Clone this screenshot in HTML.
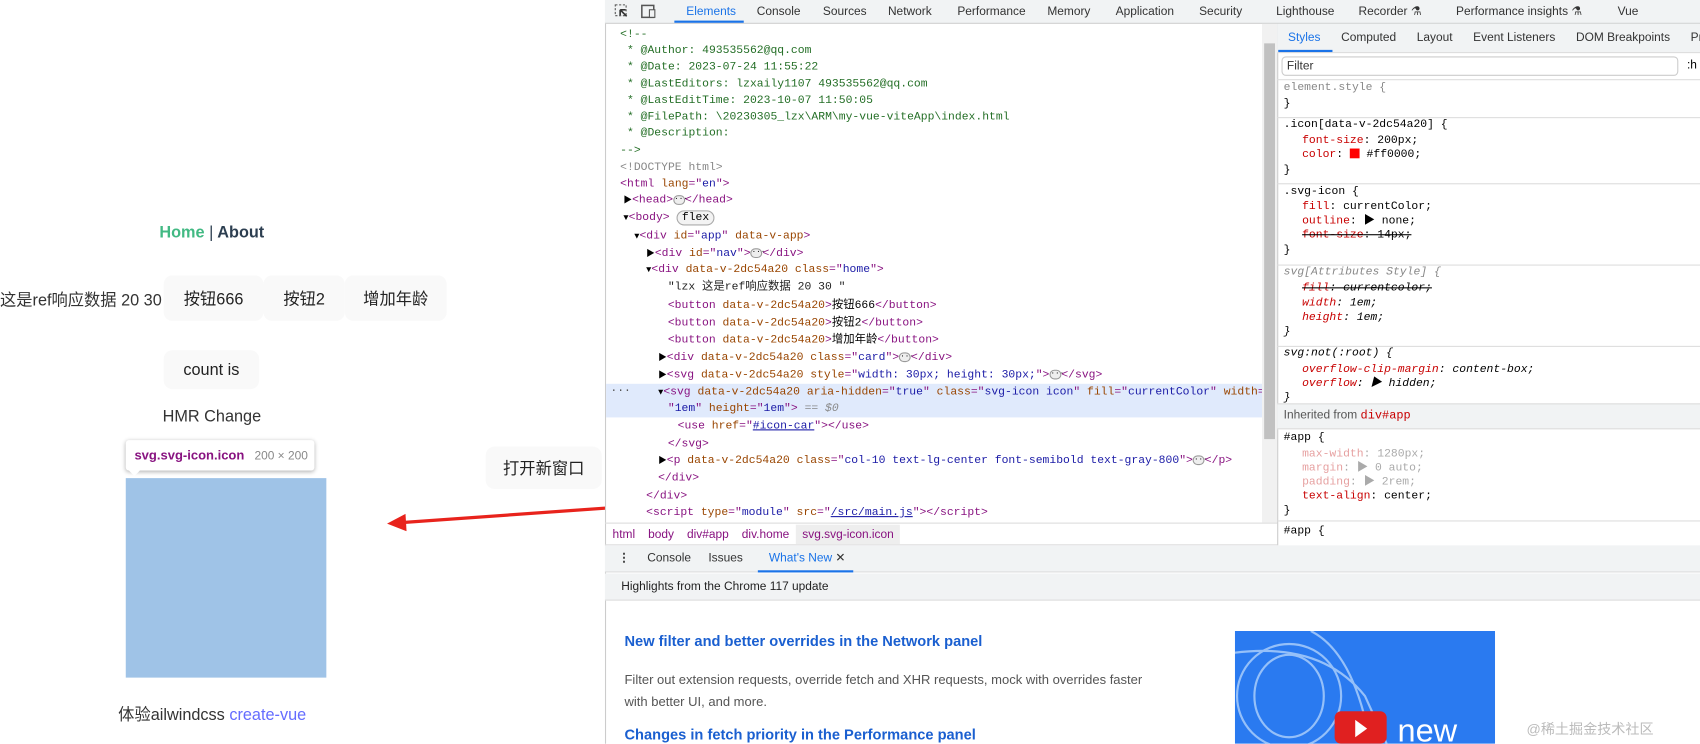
<!DOCTYPE html>
<html><head><meta charset="utf-8">
<style>
*{box-sizing:border-box;margin:0;padding:0}
html,body{width:1700px;height:744px;overflow:hidden;background:#fff}
#w{position:absolute;left:0;top:0;width:1568px;height:686px;transform:scale(1.08418);transform-origin:0 0;font-family:"Liberation Sans","Noto Sans CJK SC",sans-serif;}
.a{position:absolute;white-space:nowrap}
.btn{position:absolute;background:#f9f9f9;border-radius:8px;font-size:15px;color:#222;display:flex;align-items:center;justify-content:center}
.mono{font-family:"Liberation Mono","Noto Sans CJK SC",monospace;font-size:10.5px}
.code .a{height:15px;line-height:15px}
.tg{color:#881280}.at{color:#994500}.av{color:#1a1aa6}.cm{color:#236e25}
.tab{position:absolute;top:0;height:22px;line-height:22px;font-size:11px;color:#333}
.pr{color:#c80000}
.ell{display:inline-block;width:11px;height:9px;border:1px solid #999;border-radius:5px;font-size:7px;line-height:6px;text-align:center;vertical-align:middle;background:#eee}
</style></head><body><div id="w">
<div class="a" style="left:147px;top:206px;font-size:15px;font-weight:bold"><span style="color:#42b983">Home</span> <span style="color:#2c3e50;font-weight:normal">|</span> <span style="color:#2c3e50">About</span></div>
<div class="a" style="left:0;top:266px;font-size:15px;color:#333">这是ref响应数据 20 30</div>
<div class="btn" style="left:151px;top:254px;width:92px;height:42px">按钮666</div>
<div class="btn" style="left:243px;top:254px;width:75px;height:42px">按钮2</div>
<div class="btn" style="left:318px;top:254px;width:94px;height:42px">增加年龄</div>
<div class="btn" style="left:151px;top:323px;width:88px;height:36px">count is</div>
<div class="a" style="left:150px;top:376px;font-size:15px;color:#333">HMR Change</div>
<div class="a" style="left:116px;top:406px;width:174px;height:28px;background:#fff;border-radius:3px;box-shadow:0 1px 4px rgba(0,0,0,.3);font-size:12px;line-height:28px;padding-left:8px"><b style="color:#881280">svg.svg-icon.icon</b> <span style="color:#888;font-size:11px;margin-left:6px">200 × 200</span></div>
<div class="a" style="left:118px;top:433px;width:0;height:0;border-left:6px solid transparent;border-right:6px solid transparent;border-top:6px solid #fff"></div>
<div class="a" style="left:116px;top:441px;width:185px;height:184px;background:#9fc3e7"></div>
<div class="btn" style="left:448px;top:412px;width:107px;height:39px">打开新窗口</div>
<svg class="a" style="left:350px;top:460px" width="240" height="30"><line x1="232" y1="7" x2="20" y2="22" stroke="#e8231c" stroke-width="3"/><polygon points="7,23 24,14 25,30" fill="#e8231c"/></svg>
<div class="a" style="left:109px;top:648px;font-size:15px;color:#333">体验ailwindcss <span style="color:#646cff">create-vue</span></div>

<div class="a" style="left:558px;top:0;width:1010px;height:686px;background:#fff;border-left:1px solid #ccc"></div>
<div class="a" style="left:558px;top:0;width:1010px;height:22px;background:#f1f3f4;border-bottom:1px solid #d0d0d0"></div>
<svg class="a" style="left:566px;top:3px" width="40" height="16"><rect x="1.5" y="1.5" width="10" height="10" fill="none" stroke="#555" stroke-dasharray="2 1.5"/><path d="M6 6 L12 12 M6 6 v5 M6 6 h5" stroke="#333" stroke-width="1.5" fill="none"/><rect x="26" y="2" width="11" height="11" fill="none" stroke="#555" stroke-width="1.4"/><rect x="33" y="6" width="5" height="7" fill="#f1f3f4" stroke="#555"/></svg>
<div class="tab" style="left:633px;color:#1a73e8">Elements</div>
<div class="a" style="left:622px;top:19px;width:64px;height:2px;background:#1a73e8"></div>
<div class="tab" style="left:698px">Console</div>
<div class="tab" style="left:759px">Sources</div>
<div class="tab" style="left:819px">Network</div>
<div class="tab" style="left:883px">Performance</div>
<div class="tab" style="left:966px">Memory</div>
<div class="tab" style="left:1029px">Application</div>
<div class="tab" style="left:1106px">Security</div>
<div class="tab" style="left:1177px">Lighthouse</div>
<div class="tab" style="left:1253px">Recorder ⚗</div>
<div class="tab" style="left:1343px">Performance insights ⚗</div>
<div class="tab" style="left:1492px">Vue</div>

<div class="code mono">
<div class="a" style="left:559px;top:354px;width:606px;height:31px;background:#e0eafc"></div>
<div class="a" style="left:563px;top:354px;color:#555">···</div>
<div class="a cm" style="left:572px;top:25px">&lt;!--</div>
<div class="a cm" style="left:572px;top:40px">&nbsp;* @Author: 493535562@qq.com</div>
<div class="a cm" style="left:572px;top:55px">&nbsp;* @Date: 2023-07-24 11:55:22</div>
<div class="a cm" style="left:572px;top:71px">&nbsp;* @LastEditors: lzxaily1107 493535562@qq.com</div>
<div class="a cm" style="left:572px;top:86px">&nbsp;* @LastEditTime: 2023-10-07 11:50:05</div>
<div class="a cm" style="left:572px;top:101px">&nbsp;* @FilePath: \20230305_lzx\ARM\my-vue-viteApp\index.html</div>
<div class="a cm" style="left:572px;top:116px">&nbsp;* @Description:</div>
<div class="a cm" style="left:572px;top:132px">--&gt;</div>
<div class="a" style="left:572px;top:148px;color:#888">&lt;!DOCTYPE html&gt;</div>
<div class="a" style="left:572px;top:163px"><span class="tg">&lt;html</span> <span class="at">lang</span><span class="tg">="</span><span class="av">en</span><span class="tg">"&gt;</span></div>
<div class="a" style="left:575px;top:178px"><span style="font-size:8px">▶</span><span class="tg">&lt;head&gt;</span><span class="ell">···</span><span class="tg">&lt;/head&gt;</span></div>
<div class="a" style="left:575px;top:194px"><span style="font-size:8px">▼</span><span class="tg">&lt;body&gt;</span> <span style="border:1px solid #aaa;border-radius:7px;padding:0 4px;background:#f3f3f3">flex</span></div>
<div class="a" style="left:585px;top:211px"><span style="font-size:8px">▼</span><span class="tg">&lt;div</span> <span class="at">id</span><span class="tg">="</span><span class="av">app</span><span class="tg">"</span> <span class="at">data-v-app</span><span class="tg">&gt;</span></div>
<div class="a" style="left:596px;top:227px"><span style="font-size:8px">▶</span><span class="tg">&lt;div</span> <span class="at">id</span><span class="tg">="</span><span class="av">nav</span><span class="tg">"&gt;</span><span class="ell">···</span><span class="tg">&lt;/div&gt;</span></div>
<div class="a" style="left:596px;top:242px"><span style="font-size:8px">▼</span><span class="tg">&lt;div</span> <span class="at">data-v-2dc54a20</span> <span class="at">class</span><span class="tg">="</span><span class="av">home</span><span class="tg">"&gt;</span></div>
<div class="a" style="left:616px;top:258px;color:#222">"lzx 这是ref响应数据 20 30 "</div>
<div class="a" style="left:616px;top:275px"><span class="tg">&lt;button</span> <span class="at">data-v-2dc54a20</span><span class="tg">&gt;</span>按钮666<span class="tg">&lt;/button&gt;</span></div>
<div class="a" style="left:616px;top:291px"><span class="tg">&lt;button</span> <span class="at">data-v-2dc54a20</span><span class="tg">&gt;</span>按钮2<span class="tg">&lt;/button&gt;</span></div>
<div class="a" style="left:616px;top:307px"><span class="tg">&lt;button</span> <span class="at">data-v-2dc54a20</span><span class="tg">&gt;</span>增加年龄<span class="tg">&lt;/button&gt;</span></div>
<div class="a" style="left:607px;top:323px"><span style="font-size:8px">▶</span><span class="tg">&lt;div</span> <span class="at">data-v-2dc54a20</span> <span class="at">class</span><span class="tg">="</span><span class="av">card</span><span class="tg">"&gt;</span><span class="ell">···</span><span class="tg">&lt;/div&gt;</span></div>
<div class="a" style="left:607px;top:339px"><span style="font-size:8px">▶</span><span class="tg">&lt;svg</span> <span class="at">data-v-2dc54a20</span> <span class="at">style</span><span class="tg">="</span><span class="av">width: 30px; height: 30px;</span><span class="tg">"&gt;</span><span class="ell">···</span><span class="tg">&lt;/svg&gt;</span></div>
<div class="a" style="left:607px;top:355px"><span style="font-size:8px">▼</span><span class="tg">&lt;svg</span> <span class="at">data-v-2dc54a20</span> <span class="at">aria-hidden</span><span class="tg">="</span><span class="av">true</span><span class="tg">"</span> <span class="at">class</span><span class="tg">="</span><span class="av">svg-icon icon</span><span class="tg">"</span> <span class="at">fill</span><span class="tg">="</span><span class="av">currentColor</span><span class="tg">"</span> <span class="at">width</span><span class="tg">=</span></div>
<div class="a" style="left:616px;top:370px"><span class="tg">"</span><span class="av">1em</span><span class="tg">"</span> <span class="at">height</span><span class="tg">="</span><span class="av">1em</span><span class="tg">"&gt;</span> <span style="color:#888">== <i>$0</i></span></div>
<div class="a" style="left:625px;top:386px"><span class="tg">&lt;use</span> <span class="at">href</span><span class="tg">="</span><span class="av" style="text-decoration:underline">#icon-car</span><span class="tg">"&gt;&lt;/use&gt;</span></div>
<div class="a" style="left:616px;top:403px"><span class="tg">&lt;/svg&gt;</span></div>
<div class="a" style="left:607px;top:418px"><span style="font-size:8px">▶</span><span class="tg">&lt;p</span> <span class="at">data-v-2dc54a20</span> <span class="at">class</span><span class="tg">="</span><span class="av">col-10 text-lg-center font-semibold text-gray-800</span><span class="tg">"&gt;</span><span class="ell">···</span><span class="tg">&lt;/p&gt;</span></div>
<div class="a" style="left:607px;top:434px"><span class="tg">&lt;/div&gt;</span></div>
<div class="a" style="left:596px;top:451px"><span class="tg">&lt;/div&gt;</span></div>
<div class="a" style="left:596px;top:466px"><span class="tg">&lt;script</span> <span class="at">type</span><span class="tg">="</span><span class="av">module</span><span class="tg">"</span> <span class="at">src</span><span class="tg">="</span><span class="av" style="text-decoration:underline">/src/main.js</span><span class="tg">"&gt;&lt;/script&gt;</span></div>
</div>
<div class="a" style="left:1164px;top:22px;width:14px;height:460px;background:#f1f1f1"></div>
<div class="a" style="left:1166px;top:40px;width:10px;height:365px;background:#c1c1c1"></div>
<div class="a" style="left:558px;top:482px;width:620px;height:21px;border-top:1px solid #ddd;border-bottom:1px solid #ddd;font-size:11px;line-height:20px;color:#881280"><span style="margin-left:7px">html</span><span style="margin-left:12px">body</span><span style="margin-left:12px">div#app</span><span style="margin-left:12px">div.home</span><span style="margin-left:6px;background:#eee;padding:3px 6px">svg.svg-icon.icon</span></div>
<div class="a" style="left:1178px;top:22px;width:390px;height:481px;border-left:1px solid #ccc"></div>
<div class="a" style="left:1178px;top:22px;width:390px;height:27px;background:#f1f3f4;border-bottom:1px solid #ddd;font-size:11px;line-height:27px;color:#333"><span style="margin-left:10px;color:#1a73e8">Styles</span><span style="margin-left:19px">Computed</span><span style="margin-left:19px">Layout</span><span style="margin-left:19px">Event Listeners</span><span style="margin-left:19px">DOM Breakpoints</span><span style="margin-left:19px">Pro</span></div>
<div class="a" style="left:1179px;top:46px;width:50px;height:2px;background:#1a73e8"></div>
<div class="a" style="left:1182px;top:52px;width:366px;height:18px;border:1px solid #ccc;border-radius:4px;font-size:11px;line-height:16px;padding-left:4px;color:#333">Filter</div>
<div class="a" style="left:1556px;top:54px;font-size:11px">:h</div>
<div class="code mono" style="font-size:10.5px">
<div class="a" style="left:1178px;top:73px;width:390px;border-top:1px solid #ddd"></div>
<div class="a" style="left:1184px;top:74px;color:#888">element.style {</div>
<div class="a" style="left:1184px;top:89px">}</div>
<div class="a" style="left:1178px;top:108px;width:390px;border-top:1px solid #ddd"></div>
<div class="a" style="left:1184px;top:108px">.icon[data-v-2dc54a20] {</div>
<div class="a" style="left:1201px;top:123px"><span class="pr">font-size</span>: 200px;</div>
<div class="a" style="left:1201px;top:136px"><span class="pr">color</span>: <span style="display:inline-block;width:9px;height:9px;background:#f00;vertical-align:-1px"></span> #ff0000;</div>
<div class="a" style="left:1184px;top:150px">}</div>
<div class="a" style="left:1178px;top:169px;width:390px;border-top:1px solid #ddd"></div>
<div class="a" style="left:1184px;top:170px">.svg-icon {</div>
<div class="a" style="left:1201px;top:184px"><span class="pr">fill</span>: currentColor;</div>
<div class="a" style="left:1201px;top:197px"><span class="pr">outline</span>: ▶ none;</div>
<div class="a" style="left:1201px;top:210px;text-decoration:line-through"><span class="pr">font-size</span>: 14px;</div>
<div class="a" style="left:1184px;top:224px">}</div>
<div class="a" style="left:1178px;top:244px;width:390px;border-top:1px solid #ddd"></div>
<div class="a" style="left:1184px;top:244px;color:#888;font-style:italic">svg[Attributes Style] {</div>
<div class="a" style="left:1201px;top:259px;font-style:italic;text-decoration:line-through"><span class="pr">fill</span>: currentcolor;</div>
<div class="a" style="left:1201px;top:273px;font-style:italic"><span class="pr">width</span>: 1em;</div>
<div class="a" style="left:1201px;top:286px;font-style:italic"><span class="pr">height</span>: 1em;</div>
<div class="a" style="left:1184px;top:299px;font-style:italic">}</div>
<div class="a" style="left:1178px;top:319px;width:390px;border-top:1px solid #ddd"></div>
<div class="a" style="left:1184px;top:319px;font-style:italic">svg:not(:root) {</div>
<div class="a" style="left:1201px;top:334px;font-style:italic"><span class="pr">overflow-clip-margin</span>: content-box;</div>
<div class="a" style="left:1201px;top:347px;font-style:italic"><span class="pr">overflow</span>: ▶ hidden;</div>
<div class="a" style="left:1184px;top:360px;font-style:italic">}</div>
<div class="a" style="left:1178px;top:372px;width:390px;height:24px;background:#f1f3f4;border-top:1px solid #ddd;border-bottom:1px solid #ddd"></div>
<div class="a" style="left:1184px;top:376px;font-family:'Liberation Sans',sans-serif;font-size:11px;color:#555">Inherited from <span class="pr" style="font-family:'Liberation Mono',monospace">div#app</span></div>
<div class="a" style="left:1184px;top:397px">#app {</div>
<div class="a" style="left:1201px;top:412px;color:#aaa"><span style="color:#e6a0a0">max-width</span>: 1280px;</div>
<div class="a" style="left:1201px;top:425px;color:#aaa"><span style="color:#e6a0a0">margin</span>: ▶ 0 auto;</div>
<div class="a" style="left:1201px;top:438px;color:#aaa"><span style="color:#e6a0a0">padding</span>: ▶ 2rem;</div>
<div class="a" style="left:1201px;top:451px"><span class="pr">text-align</span>: center;</div>
<div class="a" style="left:1184px;top:464px">}</div>
<div class="a" style="left:1178px;top:480px;width:390px;border-top:1px solid #ddd"></div>
<div class="a" style="left:1184px;top:483px">#app {</div>
</div>
<div class="a" style="left:558px;top:503px;width:1010px;height:25px;background:#f1f3f4;border-bottom:1px solid #ddd;font-size:11px;line-height:25px;color:#333"><span style="margin-left:12px;font-weight:bold">⋮</span><span style="margin-left:16px">Console</span><span style="margin-left:16px">Issues</span><span style="margin-left:24px;color:#1a73e8">What's New</span> <span>✕</span></div>
<div class="a" style="left:699px;top:526px;width:88px;height:2px;background:#1a73e8"></div>
<div class="a" style="left:558px;top:529px;width:1010px;height:25px;background:#f1f3f4;border-bottom:1px solid #ddd;font-size:11px;line-height:25px;color:#222;padding-left:15px">Highlights from the Chrome 117 update</div>
<div class="a" style="left:576px;top:584px;font-size:13.5px;font-weight:bold;color:#1a5fd0">New filter and better overrides in the Network panel</div>
<div class="a" style="left:576px;top:617px;font-size:12px;line-height:20px;color:#555">Filter out extension requests, override fetch and XHR requests, mock with overrides faster<br>with better UI, and more.</div>
<div class="a" style="left:576px;top:670px;font-size:13.5px;font-weight:bold;color:#1a5fd0">Changes in fetch priority in the Performance panel</div>
<svg class="a" style="left:1139px;top:582px" width="240" height="104"><rect width="240" height="104" fill="#2a7af0"/><g stroke="#a9cdfb" stroke-width="2" fill="none" opacity=".85"><ellipse cx="50" cy="60" rx="48" ry="48"/><ellipse cx="50" cy="60" rx="32" ry="38"/><path d="M0 20 Q80 10 120 60 L140 104 M70 0 Q110 20 125 104"/></g><rect x="92" y="74" width="48" height="30" rx="6" fill="#e02020"/><polygon points="111,82 111,98 122,90" fill="#fff"/><text x="150" y="102" font-family="Liberation Sans" font-size="30" fill="#fff">new</text></svg>
<div class="a" style="left:1408px;top:662px;font-size:13px;color:#bbb">@稀土掘金技术社区</div>
</div></body></html>
